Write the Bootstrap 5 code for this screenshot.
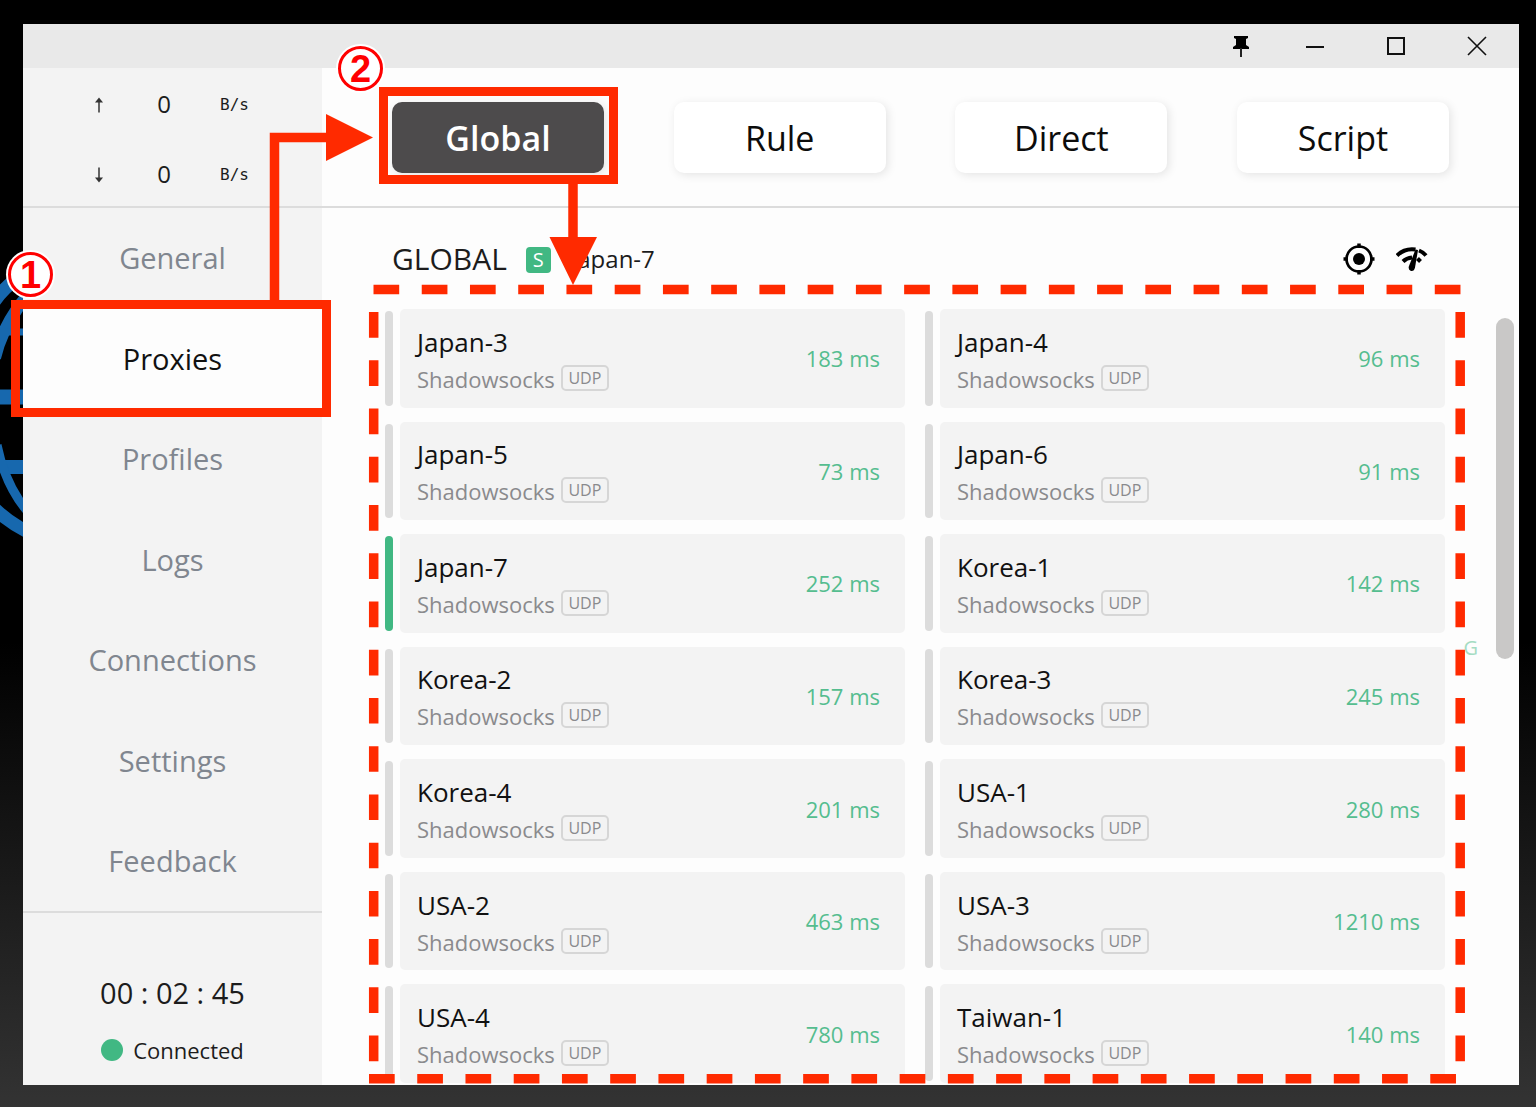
<!DOCTYPE html>
<html lang="en">
<head>
<meta charset="utf-8">
<meta name="viewport" content="width=device-width, initial-scale=1">
<title>Proxies</title>
<link href="https://cdn.jsdelivr.net/npm/bootstrap@5.3.0/dist/css/bootstrap.min.css" rel="stylesheet">
<style>
  :root { --mark: #ff2a00; --ok: #41b883; }
  body {
    font-family: "Open Sans", "Noto Sans", sans-serif;
    color: #1c1c1c;
    background: #000 linear-gradient(#000 58%, #333) fixed;
    padding: 24px 17px 22px 23px;
  }
  button { font-family: inherit; color: inherit; }
  .globe { left: 0; top: 240px; width: 23px; height: 310px; }
  .app-window { background: #fdfdfd; }
  .titlebar { height: 44px; background: #e9e9e9; padding-right: 30px; gap: 57px; }
  .titlebar button, .tools button { background: none; border: 0; padding: 0; line-height: 0; }
  .titlebar .pin { margin-right: -7px; }
  .side { width: 299px; background: #f3f3f3; }
  .traffic { height: 140px; border-bottom: 2px solid #dcdcdc; padding: 0 73px 0 67px; }
  .traffic-line { height: 70px; padding-top: 1px; }
  .traffic-value { font-size: 24px; }
  .traffic-unit { font-family: "DejaVu Sans Mono", monospace; font-size: 16px; padding-top: 2px; }
  .traffic-arrow { width: 18px; text-align: center; }
  .side-nav a { color: #80868f; font-size: 29px; text-decoration: none; }
  .side-nav a.active { background: #fdfdfd; color: #111; }
  .side-nav a.active::after {
    content: ""; position: absolute; inset: -8px -9px -8px -12px;
    border: 9px solid var(--mark); z-index: 3;
  }
  .status { height: 174px; border-top: 2px solid #dcdcdc; padding-top: 58px; }
  .clock { font-size: 29px; line-height: 44px; }
  .state { font-size: 22px; line-height: 30px; margin-top: 20px; gap: 10px; }
  .dot { width: 22px; height: 22px; border-radius: 50%; background: var(--ok); }
  .modes { height: 140px; border-bottom: 2px solid #dcdcdc; padding: 1px 70px 0; }
  .mode {
    width: 212px; height: 71px; border: 0; border-radius: 10px; background: #fff;
    font-size: 34px; line-height: 1; color: #0c0c0c; padding: 1px 0 0;
    box-shadow: 2px 2px 10px rgba(0, 0, 0, .1);
  }
  .mode.active { background: #4d4b4c; color: #fff; font-weight: 600; }
  .mode.active::after {
    content: ""; position: absolute; inset: -15px -14px -11px -13px;
    border: 9px solid var(--mark);
  }
  .group-head { height: 101px; padding: 0 91px 0 70px; }
  .group-name { font-size: 30px; font-weight: 400; margin: 0; }
  .tag-s {
    width: 25px; height: 26px; border-radius: 4px; background: var(--ok); color: #fff;
    font-size: 20px; line-height: 25px; margin: 2px 20px 0 19px;
  }
  .group-now { font-size: 24px; }
  .tools { gap: 20px; }
  .proxy-grid {
    display: grid; grid-template-columns: 1fr 1fr; grid-auto-rows: 1fr;
    gap: 14px 20px; padding: 0 74px 2px 63px;
  }
  .proxy { gap: 7px; background: none; border: 0; padding: 0; line-height: 1; }
  .proxy-bar { width: 8px; border-radius: 4px; background: #dcdcdc; margin: 2px 0; }
  .proxy.active .proxy-bar { background: var(--ok); }
  .proxy-body { background: #f3f3f3; border-radius: 5px; padding: 0 25px 0 17px; }
  .proxy-name { font-size: 26px; line-height: 38px; color: #111; padding-top: 3px; }
  .proxy-type { font-size: 22px; line-height: 36px; color: #8a8a8d; gap: 6px; }
  .tag-udp {
    font-size: 16px; line-height: 22px; width: 48px; height: 26px; text-align: center;
    border: 2px solid #d6d6d6; border-radius: 5px; margin-bottom: 2px;
  }
  .delay { font-size: 22px; color: #55bd8f; }
  .scroll-thumb { right: 5px; top: 294px; width: 18px; height: 341px; border-radius: 9px; background: #c9c8c7; }
  .ghost { right: 41px; top: 610px; font-size: 20px; line-height: 28px; color: #a5dcc3; }
  .marks { left: 0; top: 0; z-index: 4; pointer-events: none; }
  .step {
    width: 45px; height: 45px; border: 3px solid #f00; border-radius: 50%; background: #fff;
    box-shadow: 0 0 0 2px #fff; color: #f00; z-index: 5;
    font: 700 38px/40px "Liberation Sans", sans-serif; text-align: center;
  }
  .step-1 { left: 8px; top: 252px; }
  .step-2 { left: 338px; top: 46px; }
</style>
<script src="https://cdn.jsdelivr.net/npm/bootstrap@5.3.0/dist/js/bootstrap.bundle.min.js"></script>
</head>
<body class="min-vh-100 d-flex position-relative">

<svg class="globe position-absolute" viewBox="0 0 23 310" fill="none" stroke="#1768ae" aria-hidden="true">
  <path d="M-6 62Q6 44 30 30" stroke-width="13"/>
  <path d="M-5 118Q3 84 28 55" stroke-width="12"/>
  <path d="M4 92H23" stroke-width="7"/>
  <path d="M0 157H23" stroke-width="15"/>
  <path d="M3 227H23" stroke-width="14"/>
  <path d="M-3 205Q5 245 28 272" stroke-width="9"/>
  <path d="M-6 268Q8 282 28 292" stroke-width="13"/>
</svg>

<div class="app-window flex-fill d-flex flex-column position-relative">
  <header class="titlebar d-flex align-items-center justify-content-end">
    <button type="button" class="pin" aria-label="Pin"><svg width="24" height="24" viewBox="0 0 24 24"><path d="M5 2h14v2l-2 1v6l3 2v2H4v-2l3-2V5L5 4z" fill="#000"/><path d="M12 14v9" stroke="#222" stroke-width="2"/></svg></button>
    <button type="button" aria-label="Minimize"><svg width="24" height="24" viewBox="0 0 24 24"><path d="M3 13H21" stroke="#111" stroke-width="2"/></svg></button>
    <button type="button" aria-label="Maximize"><svg width="24" height="24" viewBox="0 0 24 24"><path d="M4 4H20V20H4z" fill="none" stroke="#111" stroke-width="2"/></svg></button>
    <button type="button" aria-label="Close"><svg width="24" height="24" viewBox="0 0 24 24"><path d="M3 3 21 21M21 3 3 21" stroke="#111" stroke-width="1.600"/></svg></button>
  </header>

  <div class="flex-fill d-flex">
    <aside class="side flex-shrink-0 d-flex flex-column">
      <div class="traffic">
        <div class="traffic-line d-flex align-items-center justify-content-between">
          <span class="traffic-arrow"><svg width="10" height="16" viewBox="0 0 10 16"><path d="M5 2V15.500" stroke="#333" stroke-width="1.500"/><path d="M1 5.500 5 .5 9 5.500z" fill="#333"/></svg></span>
          <span class="traffic-value">0</span><span class="traffic-unit">B/s</span>
        </div>
        <div class="traffic-line d-flex align-items-center justify-content-between">
          <span class="traffic-arrow"><svg width="10" height="16" viewBox="0 0 10 16"><path d="M5 .5V14" stroke="#333" stroke-width="1.500"/><path d="M1 10.500 5 15.500 9 10.500z" fill="#333"/></svg></span>
          <span class="traffic-value">0</span><span class="traffic-unit">B/s</span>
        </div>
      </div>
      <nav class="side-nav flex-fill d-flex flex-column">
        <a href="#" class="flex-fill d-flex align-items-center justify-content-center">General</a>
        <a href="#" class="flex-fill d-flex align-items-center justify-content-center position-relative active" aria-current="page">Proxies</a>
        <a href="#" class="flex-fill d-flex align-items-center justify-content-center">Profiles</a>
        <a href="#" class="flex-fill d-flex align-items-center justify-content-center">Logs</a>
        <a href="#" class="flex-fill d-flex align-items-center justify-content-center">Connections</a>
        <a href="#" class="flex-fill d-flex align-items-center justify-content-center">Settings</a>
        <a href="#" class="flex-fill d-flex align-items-center justify-content-center">Feedback</a>
      </nav>
      <div class="status text-center">
        <div class="clock">00 : 02 : 45</div>
        <div class="state d-flex align-items-center justify-content-center"><span class="dot"></span>Connected</div>
      </div>
    </aside>

    <main class="flex-fill d-flex flex-column">
      <div class="modes d-flex align-items-center justify-content-between">
        <button type="button" class="mode active position-relative">Global</button>
        <button type="button" class="mode">Rule</button>
        <button type="button" class="mode">Direct</button>
        <button type="button" class="mode">Script</button>
      </div>
      <div class="group-head d-flex align-items-center">
        <h1 class="group-name">GLOBAL</h1>
        <span class="tag-s text-center">S</span>
        <span class="group-now">Japan-7</span>
        <div class="tools d-flex ms-auto">
          <button type="button" aria-label="Locate"><svg width="34" height="34" viewBox="0 0 34 34"><circle cx="17" cy="17" r="12.500" fill="none" stroke="#000" stroke-width="2.700"/><circle cx="17" cy="17" r="6" fill="#000"/><path d="M17 1.500V6M17 28V32.500M1.500 17H6M28 17H32.500" stroke="#000" stroke-width="3.500"/></svg></button>
          <button type="button" aria-label="Test latency"><svg width="32" height="34" viewBox="0 0 32 34"><g fill="none" stroke="#000" stroke-width="4"><path d="M1 13.500Q9 6 19.500 7.600"/><path d="M23 8.500Q27 10 30 13.500"/><path d="M7 19.500Q10.500 16 16 15.500"/><path d="M21.500 16.500 24.500 19.500"/></g><path d="M19.500 7.500 22 8 19 25.500Q18.200 29.500 15 29 12 28 12.800 24.500z" fill="#000"/></svg></button>
        </div>
      </div>
      <section class="proxy-grid flex-fill" id="proxies" aria-label="Proxy list"></section>
    </main>
  </div>

  <span class="scroll-thumb position-absolute"></span>
  <span class="ghost position-absolute">G</span>
</div>

<svg class="marks position-absolute" width="1536" height="1107" viewBox="0 0 1536 1107" aria-hidden="true">
  <g fill="none" stroke="#ff2a00" stroke-width="9.500">
    <path d="M274.500 302V137.500H328"/>
    <path d="M573 184V240"/>
    <g stroke-dasharray="25.700 22.540">
      <path d="M373.500 289.500H1461"/>
      <path d="M369 1078.700H1456"/>
      <path d="M373.700 312V1063"/>
      <path d="M1460.200 312V1063"/>
    </g>
  </g>
  <path d="M326 114 373 137.500 326 161zM549.500 237H597L573 285z" fill="#ff2a00"/>
</svg>
<span class="step step-1 position-absolute">1</span>
<span class="step step-2 position-absolute">2</span>

<script>
  const proxies = [
    ["Japan-3", 183], ["Japan-4", 96], ["Japan-5", 73], ["Japan-6", 91],
    ["Japan-7", 252], ["Korea-1", 142], ["Korea-2", 157], ["Korea-3", 245],
    ["Korea-4", 201], ["USA-1", 280], ["USA-2", 463], ["USA-3", 1210],
    ["USA-4", 780], ["Taiwan-1", 140]
  ];
  document.getElementById("proxies").innerHTML = proxies.map(([name, ms]) => `
    <button type="button" class="proxy d-flex text-start ${name === "Japan-7" ? "active" : ""}">
      <span class="proxy-bar align-self-stretch"></span>
      <span class="proxy-body flex-fill align-self-stretch d-flex align-items-center justify-content-between">
        <span>
          <span class="proxy-name d-block">${name}</span>
          <span class="proxy-type d-flex align-items-center">Shadowsocks<span class="tag-udp">UDP</span></span>
        </span>
        <span class="delay">${ms} ms</span>
      </span>
    </button>`).join("");
</script>
</body>
</html>
